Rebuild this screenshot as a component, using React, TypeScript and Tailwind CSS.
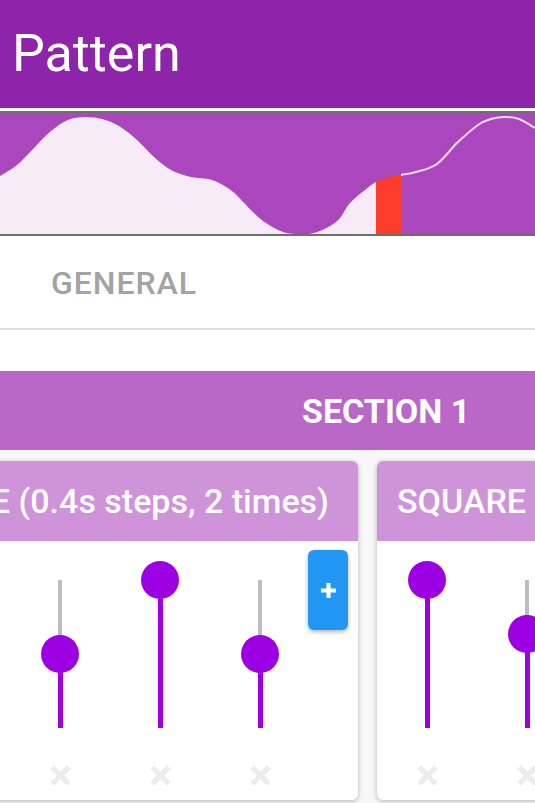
import React from "react";

type Pt = [number, number];

// waveform outline, y relative to the top of the waveform strip
const WAVE: Pt[] = [
  [0, 63], [17, 52], [34, 35], [51, 18], [68, 7], [85, 4], [102, 6],
  [119, 13], [137, 27], [154, 44], [171, 57], [191, 64], [212, 67],
  [232, 78], [246, 92], [263, 108], [283, 119], [300, 121], [314, 120],
  [330, 113], [340, 105], [350, 90], [365, 77], [376, 69], [390, 64],
  [401, 62], [416, 59], [437, 51], [457, 30], [478, 12], [491, 6],
  [505, 4], [519, 6], [535, 15],
];

const smoothPath = (pts: Pt[]) => {
  let d = `M${pts[0][0]},${pts[0][1]}`;
  for (let i = 0; i < pts.length - 1; i++) {
    const p0 = pts[i - 1] || pts[i];
    const p1 = pts[i];
    const p2 = pts[i + 1];
    const p3 = pts[i + 2] || p2;
    const c1x = p1[0] + (p2[0] - p0[0]) / 6;
    const c1y = p1[1] + (p2[1] - p0[1]) / 6;
    const c2x = p2[0] - (p3[0] - p1[0]) / 6;
    const c2y = p2[1] - (p3[1] - p1[1]) / 6;
    d += ` C${c1x},${c1y} ${c2x},${c2y} ${p2[0]},${p2[1]}`;
  }
  return d;
};

const Waveform = () => {
  const line = smoothPath(WAVE);
  const area = `${line} L535,121 L0,121 Z`;
  return (
    <svg viewBox="0 0 535 121" width="535" height="121" className="block">
      <defs>
        <clipPath id="played">
          <rect x="0" y="0" width="376" height="121" />
        </clipPath>
        <clipPath id="cursor">
          <rect x="376" y="0" width="25" height="121" />
        </clipPath>
        <clipPath id="rest">
          <rect x="401" y="0" width="134" height="121" />
        </clipPath>
      </defs>
      <rect width="535" height="121" fill="#ab47bc" />
      <path d={area} fill="#f7ebf8" clipPath="url(#played)" />
      <path d={area} fill="#ff3d2c" clipPath="url(#cursor)" />
      <path
        d={line}
        fill="none"
        stroke="#f1dcf4"
        strokeWidth="2"
        clipPath="url(#rest)"
      />
    </svg>
  );
};

const TRACK = 148;

const Slider = ({ value }: { value: number }) => {
  const top = (1 - value) * TRACK;
  return (
    <div className="flex w-[100px] flex-none flex-col items-center pt-[39px]">
      <div className="relative flex h-[148px] w-[38px] justify-center">
        <div className="h-full w-[4px] bg-[#bdbdbd]" />
        <div
          className="absolute bottom-0 left-[16.5px] w-[5px] bg-[#9c00e2]"
          style={{ height: TRACK - top }}
        />
        <div
          className="absolute left-0 h-[38px] w-[38px] rounded-full bg-[#9c00e2]"
          style={{ top: top - 19 }}
        />
      </div>
      <svg viewBox="0 0 24 24" className="mt-[35px] h-[25px] w-[25px]">
        <path
          d="M4 4 L20 20 M20 4 L4 20"
          stroke="#ececec"
          strokeWidth="5"
          fill="none"
        />
      </svg>
    </div>
  );
};

const Card = ({
  title,
  values,
  alignEnd,
  className,
}: {
  title: string;
  values: number[];
  alignEnd?: boolean;
  className?: string;
}) => (
  <div
    className={`relative flex h-[339px] flex-none flex-col overflow-hidden rounded-[6px] bg-white shadow-[0_1px_5px_rgba(0,0,0,0.28)] ${className}`}
  >
    <div
      className={`flex h-[80px] items-center overflow-hidden whitespace-nowrap bg-[#ce93d8] text-[34px] font-medium leading-none text-white ${
        alignEnd ? "justify-end pr-[29px]" : "justify-start pl-[20px]"
      }`}
    >
      {title}
    </div>
    <div className="flex flex-1">
      {values.map((v, i) => (
        <Slider key={i} value={v} />
      ))}
    </div>
    {alignEnd ? (
      <button className="absolute right-[10px] top-[89px] flex h-[80px] w-[40px] items-center justify-center rounded-[6px] bg-[#2196f3] shadow-[0_2px_4px_rgba(0,0,0,0.3)]">
        <svg viewBox="0 0 18 18" className="h-[17px] w-[17px]">
          <path
            d="M9 1 V17 M1 9 H17"
            stroke="white"
            strokeWidth="4.4"
            fill="none"
          />
        </svg>
      </button>
    ) : null}
  </div>
);

export default function App() {
  return (
    <div className="h-[803px] w-[535px] overflow-hidden bg-[#f7f7f7] font-['Roboto',sans-serif]">
      <header className="flex h-[108px] items-center bg-[#8e24aa] pl-[12px]">
        <h1 className="text-[52px] font-normal leading-none text-white">
          Pattern
        </h1>
      </header>
      <div className="h-[3px] bg-white" />
      <div className="border-y-2 border-[#6e6e6e]">
        <Waveform />
      </div>
      <div className="flex h-[94px] items-center border-b-2 border-[#e0e0e0] bg-white pl-[51px] pt-[2px]">
        <span className="text-[32px] font-medium leading-none tracking-[0.03em] text-[#a3a3a3]">
          GENERAL
        </span>
      </div>
      <div className="h-[41px] bg-white" />
      <div className="flex h-[79px] items-center bg-[#ba68c8] pl-[302px]">
        <span className="text-[34px] font-bold leading-none text-white">
          SECTION 1
        </span>
      </div>
      <div className="flex gap-[20px] pt-[11px]">
        <Card
          title="TRIANGLE (0.4s steps, 2 times)"
          values={[0.5, 0.5, 1, 0.5]}
          alignEnd
          className="ml-[-90px] w-[448px]"
        />
        <Card
          title="SQUARE (0.4s steps, 2 times)"
          values={[1, 0.635, 1]}
          className="ml-[-1px] w-[348px]"
        />
      </div>
    </div>
  );
}
